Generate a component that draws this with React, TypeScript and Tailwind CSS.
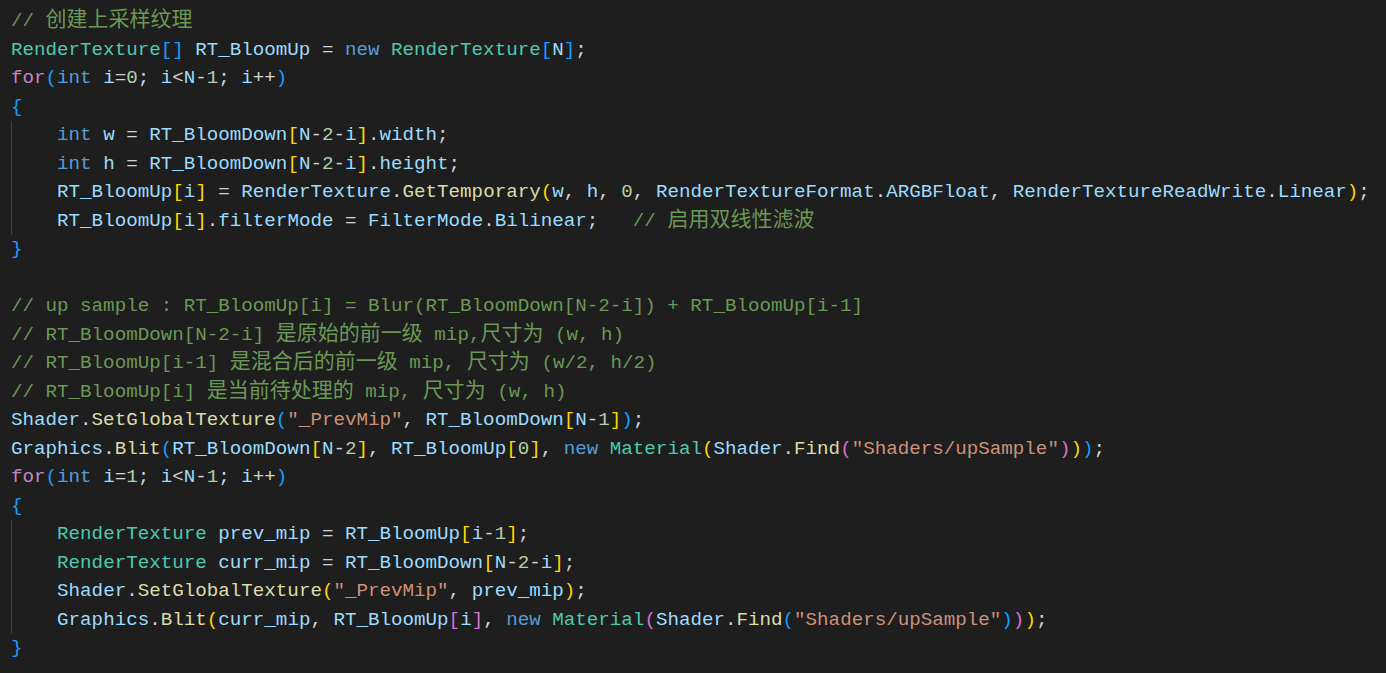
import React from "react";

type Tok = [string, string];

const COL: Record<string, string> = {
  p: "text-[#D4D4D4]",
  c: "text-[#6A9955]",
  k: "text-[#569CD6]",
  f: "text-[#C586C0]",
  t: "text-[#4EC9B0]",
  v: "text-[#9CDCFE]",
  fn: "text-[#DCDCAA]",
  n: "text-[#B5CEA8]",
  s: "text-[#CE9178]",
  b1: "text-[#FFD700]",
  b2: "text-[#DA70D6]",
  b3: "text-[#179FFF]",
};

const cjkRe = /([\u3000-\u9fff\uff00-\uffef]+)/;

function Text({ kind, text }: { kind: string; text: string }) {
  const parts = text.split(cjkRe).filter((s) => s.length > 0);
  return (
    <span className={COL[kind]}>
      {parts.map((part, i) =>
        cjkRe.test(part) ? (
          <span
            key={i}
            className="text-[21px] leading-[0px] [font-family:'Noto_Sans_CJK_SC',sans-serif]"
          >
            {part}
          </span>
        ) : (
          <span key={i}>{part}</span>
        )
      )}
    </span>
  );
}

function Line({ toks }: { toks: Tok[] }) {
  return (
    <div className="h-[28.5px] leading-[28.5px] whitespace-pre">
      {toks.length === 0 ? " " : toks.map(([k, t], i) => <Text key={i} kind={k} text={t} />)}
    </div>
  );
}

function Block({ lines }: { lines: Tok[][] }) {
  return (
    <div className="border-l border-[#404040] pl-[45.08px]">
      {lines.map((l, i) => (
        <Line key={i} toks={l} />
      ))}
    </div>
  );
}

const STR_UP = '"Shaders/upSample"';

const forLine = (start: string): Tok[] => [
  ["f", "for"],
  ["b3", "("],
  ["k", "int"],
  ["p", " "],
  ["v", "i"],
  ["p", "="],
  ["n", start],
  ["p", "; "],
  ["v", "i"],
  ["p", "<"],
  ["v", "N"],
  ["p", "-"],
  ["n", "1"],
  ["p", "; "],
  ["v", "i"],
  ["p", "++"],
  ["b3", ")"],
];

const block1: Tok[][] = [
  [
    ["k", "int"], ["p", " "], ["v", "w"], ["p", " = "], ["v", "RT_BloomDown"],
    ["b1", "["], ["v", "N"], ["p", "-"], ["n", "2"], ["p", "-"], ["v", "i"], ["b1", "]"],
    ["p", "."], ["v", "width"], ["p", ";"],
  ],
  [
    ["k", "int"], ["p", " "], ["v", "h"], ["p", " = "], ["v", "RT_BloomDown"],
    ["b1", "["], ["v", "N"], ["p", "-"], ["n", "2"], ["p", "-"], ["v", "i"], ["b1", "]"],
    ["p", "."], ["v", "height"], ["p", ";"],
  ],
  [
    ["v", "RT_BloomUp"], ["b1", "["], ["v", "i"], ["b1", "]"], ["p", " = "],
    ["v", "RenderTexture"], ["p", "."], ["fn", "GetTemporary"], ["b1", "("],
    ["v", "w"], ["p", ", "], ["v", "h"], ["p", ", "], ["n", "0"], ["p", ", "],
    ["v", "RenderTextureFormat"], ["p", "."], ["v", "ARGBFloat"], ["p", ", "],
    ["v", "RenderTextureReadWrite"], ["p", "."], ["v", "Linear"], ["b1", ")"], ["p", ";"],
  ],
  [
    ["v", "RT_BloomUp"], ["b1", "["], ["v", "i"], ["b1", "]"], ["p", "."], ["v", "filterMode"],
    ["p", " = "], ["v", "FilterMode"], ["p", "."], ["v", "Bilinear"], ["p", ";   "],
    ["c", "// 启用双线性滤波"],
  ],
];

const block2: Tok[][] = [
  [
    ["t", "RenderTexture"], ["p", " "], ["v", "prev_mip"], ["p", " = "], ["v", "RT_BloomUp"],
    ["b1", "["], ["v", "i"], ["p", "-"], ["n", "1"], ["b1", "]"], ["p", ";"],
  ],
  [
    ["t", "RenderTexture"], ["p", " "], ["v", "curr_mip"], ["p", " = "], ["v", "RT_BloomDown"],
    ["b1", "["], ["v", "N"], ["p", "-"], ["n", "2"], ["p", "-"], ["v", "i"], ["b1", "]"], ["p", ";"],
  ],
  [
    ["v", "Shader"], ["p", "."], ["fn", "SetGlobalTexture"], ["b1", "("], ["s", '"_PrevMip"'],
    ["p", ", "], ["v", "prev_mip"], ["b1", ")"], ["p", ";"],
  ],
  [
    ["v", "Graphics"], ["p", "."], ["fn", "Blit"], ["b1", "("], ["v", "curr_mip"], ["p", ", "],
    ["v", "RT_BloomUp"], ["b2", "["], ["v", "i"], ["b2", "]"], ["p", ", "], ["k", "new"], ["p", " "],
    ["t", "Material"], ["b2", "("], ["v", "Shader"], ["p", "."], ["fn", "Find"], ["b3", "("],
    ["s", STR_UP], ["b3", ")"], ["b2", ")"], ["b1", ")"], ["p", ";"],
  ],
];

export default function App() {
  return (
    <div className="w-[1386px] h-[673px] bg-[#1E1E1E] overflow-hidden pt-[7px] pl-[11px] text-[19.2px] [font-family:'Liberation_Mono',monospace] text-[#D4D4D4]">
      <Line toks={[["c", "// 创建上采样纹理"]]} />
      <Line
        toks={[
          ["t", "RenderTexture"], ["b3", "[]"], ["p", " "], ["v", "RT_BloomUp"], ["p", " = "],
          ["k", "new"], ["p", " "], ["t", "RenderTexture"], ["b3", "["], ["v", "N"], ["b3", "]"], ["p", ";"],
        ]}
      />
      <Line toks={forLine("0")} />
      <Line toks={[["b3", "{"]]} />
      <Block lines={block1} />
      <Line toks={[["b3", "}"]]} />
      <Line toks={[]} />
      <Line toks={[["c", "// up sample : RT_BloomUp[i] = Blur(RT_BloomDown[N-2-i]) + RT_BloomUp[i-1]"]]} />
      <Line toks={[["c", "// RT_BloomDown[N-2-i] 是原始的前一级 mip,尺寸为 (w, h)"]]} />
      <Line toks={[["c", "// RT_BloomUp[i-1] 是混合后的前一级 mip, 尺寸为 (w/2, h/2)"]]} />
      <Line toks={[["c", "// RT_BloomUp[i] 是当前待处理的 mip, 尺寸为 (w, h)"]]} />
      <Line
        toks={[
          ["v", "Shader"], ["p", "."], ["fn", "SetGlobalTexture"], ["b3", "("], ["s", '"_PrevMip"'],
          ["p", ", "], ["v", "RT_BloomDown"], ["b1", "["], ["v", "N"], ["p", "-"], ["n", "1"], ["b1", "]"],
          ["b3", ")"], ["p", ";"],
        ]}
      />
      <Line
        toks={[
          ["v", "Graphics"], ["p", "."], ["fn", "Blit"], ["b3", "("], ["v", "RT_BloomDown"],
          ["b1", "["], ["v", "N"], ["p", "-"], ["n", "2"], ["b1", "]"], ["p", ", "], ["v", "RT_BloomUp"],
          ["b1", "["], ["n", "0"], ["b1", "]"], ["p", ", "], ["k", "new"], ["p", " "], ["t", "Material"],
          ["b1", "("], ["v", "Shader"], ["p", "."], ["fn", "Find"], ["b2", "("], ["s", STR_UP],
          ["b2", ")"], ["b1", ")"], ["b3", ")"], ["p", ";"],
        ]}
      />
      <Line toks={forLine("1")} />
      <Line toks={[["b3", "{"]]} />
      <Block lines={block2} />
      <Line toks={[["b3", "}"]]} />
    </div>
  );
}
